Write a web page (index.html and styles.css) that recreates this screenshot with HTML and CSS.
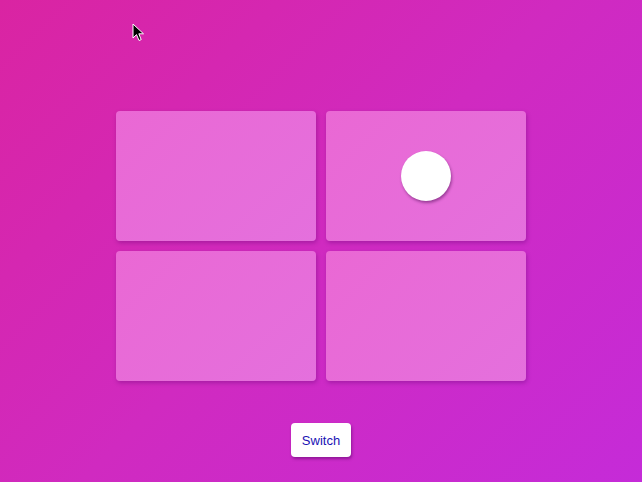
FILE: index.html
```html
<!DOCTYPE html>
<html>
<head>
<meta charset="utf-8">
<link rel="stylesheet" href="styles.css">
</head>
<body>
<div class="page">
  <div class="grid">
    <div class="card"></div>
    <div class="card"><div class="ball"></div></div>
    <div class="card"></div>
    <div class="card"></div>
  </div>
  <button class="switch">Switch</button>
</div>
<svg class="cursor" width="14" height="20" viewBox="0 0 14 20">
  <path d="M1 1 L1 15 L4.5 11.6 L7 17.5 L9.2 16.6 L6.8 10.8 L11.5 10.8 Z" fill="#000" stroke="#fff" stroke-width="1" stroke-linejoin="round"/>
</svg>
</body>
</html>
```
FILE: styles.css
```css
html, body {
  margin: 0;
  padding: 0;
  width: 642px;
  height: 482px;
  overflow: hidden;
}
body {
  background: linear-gradient(135deg, #da24a2 0%, #d02ac0 50%, #c52bd8 100%);
  font-family: "Liberation Sans", Arial, sans-serif;
  position: relative;
}
.page {
  display: flex;
  flex-direction: column;
  align-items: center;
  padding-top: 111px;
}
.grid {
  display: grid;
  grid-template-columns: 200px 200px;
  grid-template-rows: 130px 130px;
  gap: 10px;
}
.card {
  background: linear-gradient(135deg, #ea68d4 0%, #e470dd 100%);
  border-radius: 4px;
  box-shadow: 1px 2px 4px rgba(90, 0, 110, 0.35);
  display: flex;
  align-items: center;
  justify-content: center;
}
.ball {
  width: 50px;
  height: 50px;
  border-radius: 50%;
  background: #fff;
  box-shadow: 1px 2px 3px rgba(60, 0, 70, 0.45);
}
.switch {
  margin-top: 42px;
  width: 60px;
  height: 34px;
  padding: 0;
  border: none;
  border-radius: 4px;
  background: #fff;
  color: #1a12b4;
  font-family: "Liberation Sans", Arial, sans-serif;
  font-size: 13px;
  box-shadow: 1px 2px 3px rgba(70, 0, 90, 0.45);
}
.cursor {
  position: absolute;
  left: 132px;
  top: 23px;
}
```
